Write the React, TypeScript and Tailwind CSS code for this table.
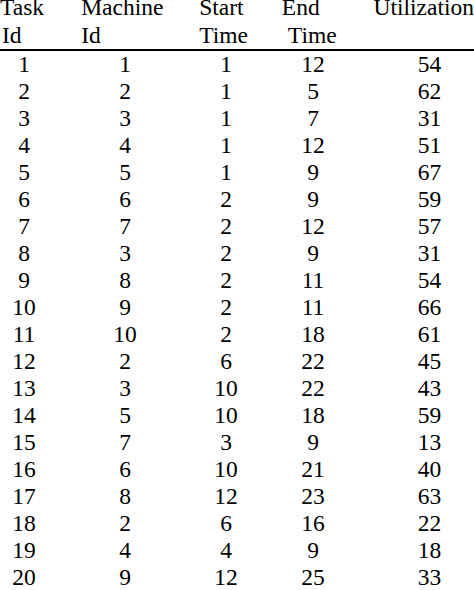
import React from 'react';

type Task = {
  id: number;
  machine: number;
  start: number;
  end: number;
  utilization: number;
};

const tasks: Task[] = [
  { id: 1, machine: 1, start: 1, end: 12, utilization: 54 },
  { id: 2, machine: 2, start: 1, end: 5, utilization: 62 },
  { id: 3, machine: 3, start: 1, end: 7, utilization: 31 },
  { id: 4, machine: 4, start: 1, end: 12, utilization: 51 },
  { id: 5, machine: 5, start: 1, end: 9, utilization: 67 },
  { id: 6, machine: 6, start: 2, end: 9, utilization: 59 },
  { id: 7, machine: 7, start: 2, end: 12, utilization: 57 },
  { id: 8, machine: 3, start: 2, end: 9, utilization: 31 },
  { id: 9, machine: 8, start: 2, end: 11, utilization: 54 },
  { id: 10, machine: 9, start: 2, end: 11, utilization: 66 },
  { id: 11, machine: 10, start: 2, end: 18, utilization: 61 },
  { id: 12, machine: 2, start: 6, end: 22, utilization: 45 },
  { id: 13, machine: 3, start: 10, end: 22, utilization: 43 },
  { id: 14, machine: 5, start: 10, end: 18, utilization: 59 },
  { id: 15, machine: 7, start: 3, end: 9, utilization: 13 },
  { id: 16, machine: 6, start: 10, end: 21, utilization: 40 },
  { id: 17, machine: 8, start: 12, end: 23, utilization: 63 },
  { id: 18, machine: 2, start: 6, end: 16, utilization: 22 },
  { id: 19, machine: 4, start: 4, end: 9, utilization: 18 },
  { id: 20, machine: 9, start: 12, end: 25, utilization: 33 },
];

const App: React.FC = () => {
  return (
    <div className="w-[474px] h-[590px] overflow-hidden bg-white text-black [font-family:'Liberation_Serif',serif] text-[23.5px]">
      {/* Header, two lines per column */}
      <div className="flex mt-[-7px] leading-[28px] whitespace-nowrap">
        <div className="w-[81.5px]">
          <div>Task</div>
          <div className="pl-[2px]">Id</div>
        </div>
        <div className="w-[118.5px]">
          <div>Machine</div>
          <div>Id</div>
        </div>
        <div className="w-[83px]">
          <div>Start</div>
          <div>Time</div>
        </div>
        <div className="w-[92px]">
          <div>End</div>
          <div className="pl-[6px]">Time</div>
        </div>
        <div className="flex-1">
          <div>Utilization</div>
        </div>
      </div>

      <div className="h-[1.5px] bg-black" />

      {/* Rows */}
      <div className="grid grid-cols-[48px_154px_48px_126px_98px] leading-[27px] text-center">
        {tasks.map(t => (
          <React.Fragment key={t.id}>
            <div>{t.id}</div>
            <div>{t.machine}</div>
            <div>{t.start}</div>
            <div>{t.end}</div>
            <div className="pl-[9px]">{t.utilization}</div>
          </React.Fragment>
        ))}
      </div>
    </div>
  );
};

export default App;
